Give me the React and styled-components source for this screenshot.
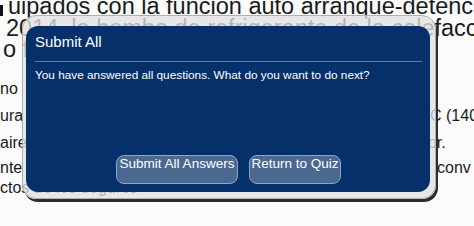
import styled, { createGlobalStyle } from "styled-components";

const Global = createGlobalStyle`
    html, body {
        margin: 0;
        padding: 0;
        background: #fbfbfb;
        overflow: hidden;
    }
    body {
        width: 474px;
        height: 226px;
        font-family: "Liberation Sans", Arial, sans-serif;
    }
`;

const Page = styled.div`
    position: relative;
    width: 474px;
    height: 226px;
    overflow: hidden;
    color: #1a1a1a;
`;

const BigLine = styled.div`
    display: flex;
    align-items: center;
    font-size: 23.5px;
    line-height: 21px;
    white-space: nowrap;
    padding-left: ${(p) => p.$indent || 0}px;
    margin-top: ${(p) => p.$top || 0}px;
`;

const Mark = styled.span`
    flex: none;
    width: 3px;
    height: 11px;
    margin: 8px 5px 0 0;
    background: #111;
`;

const Spacer = styled.div`
    height: ${(p) => p.$h}px;
`;

const Line = styled.div`
    display: flex;
    font-size: 16px;
    line-height: ${(p) => p.$lh || 27}px;
    white-space: nowrap;
`;

const Left = styled.span`
    flex: 1;
`;

const Right = styled.span`
    width: ${(p) => p.$w}px;
    overflow: hidden;
`;

const Frame = styled.div`
    position: absolute;
    left: 22px;
    top: 15px;
    width: 414px;
    height: 184px;
    box-sizing: border-box;
    padding: 10px 5px 6px 3px;
    border: 1px solid #b0b0b0;
    border-radius: 14px;
    background: rgba(226, 226, 226, 0.78);
    box-shadow: 2px 3px 0 #2e2e2e;
    display: flex;
`;

const Panel = styled.div`
    flex: 1;
    display: flex;
    flex-direction: column;
    padding: 7px 8px 8px 9px;
    border-radius: 12px;
    background: #05306a;
    color: #fff;
`;

const Title = styled.div`
    font-size: 15px;
    line-height: 17px;
`;

const Rule = styled.div`
    height: 1px;
    margin-top: 11px;
    background: #587aa6;
`;

const Message = styled.div`
    margin-top: 7px;
    font-size: 11.8px;
    line-height: 13px;
`;

const Actions = styled.div`
    margin-top: auto;
    display: flex;
    justify-content: center;
    gap: 11px;
`;

const Button = styled.button`
    width: ${(p) => p.$w}px;
    height: 29px;
    padding: 0;
    display: flex;
    justify-content: center;
    align-items: flex-start;
    font-family: "Liberation Sans", Arial, sans-serif;
    font-size: 13.5px;
    line-height: 15px;
    color: #fff;
    white-space: nowrap;
    background: #4b6890;
    border: 1px solid #8ba7cf;
    border-radius: 8px;
`;

const App = () => {
    return (
        <Page>
            <Global />
            <BigLine $top={-4}>
                <Mark />
                uipados con la función auto arranque-detención
            </BigLine>
            <BigLine $indent={6} $top={1}>
                2014, la bomba de refrigerante de la calefacción
            </BigLine>
            <BigLine $indent={3}>o fue</BigLine>
            <Spacer $h={15} />
            <Line>
                <Left>no</Left>
            </Line>
            <Line>
                <Left>ura</Left>
                <Right $w={44}>C (140</Right>
            </Line>
            <Line>
                <Left>aire</Left>
                <Right $w={55}>rior.</Right>
            </Line>
            <Line $lh={24}>
                <Left>nte</Left>
                <Right $w={37}>conv</Right>
            </Line>
            <Line $lh={15}>
                <Left>ctos de los seguros</Left>
            </Line>
            <Frame>
                <Panel>
                    <Title>Submit All</Title>
                    <Rule />
                    <Message>
                        You have answered all questions. What do you want to do next?
                    </Message>
                    <Actions>
                        <Button $w={122}>Submit All Answers</Button>
                        <Button $w={92}>Return to Quiz</Button>
                    </Actions>
                </Panel>
            </Frame>
        </Page>
    );
};

export default App;
